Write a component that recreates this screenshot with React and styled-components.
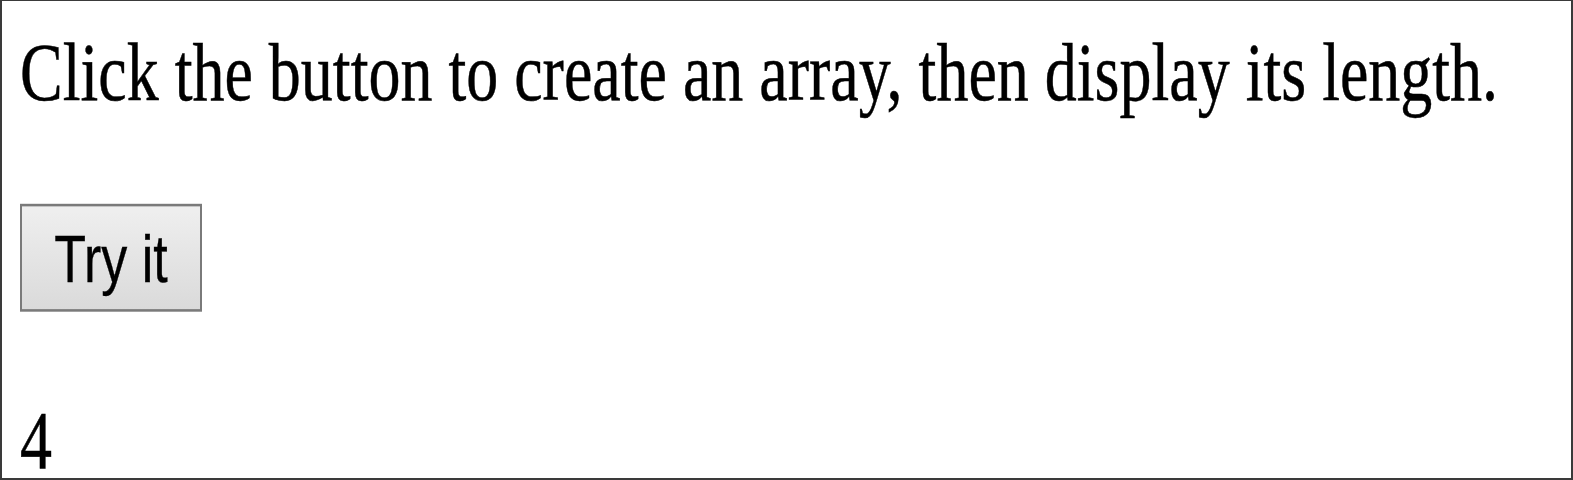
import React, { useState } from 'react';
import styled, { createGlobalStyle } from 'styled-components';

const GlobalStyle = createGlobalStyle`
    html, body { margin: 0; padding: 0; background: #fff; }
    body { overflow: hidden; }
`

const Frame = styled.div`
    box-sizing: border-box;
    width: 1573px;
    height: 480px;
    border: 2px solid #3a3a3a;
    border-top-width: 1px;
    overflow: hidden;
    background: #fff;
`

// the screenshot is stretched vertically, so the whole page is scaled on Y
const Page = styled.div`
    transform: scaleY(1.3);
    transform-origin: top left;
    padding: 18px 0 0 18px;
    font-family: "Liberation Serif", "Times New Roman", serif;
    font-size: 64px;
    color: #000;
    -webkit-text-stroke: 0.4px #000;
`

const Text = styled.p`
    margin: ${p => p.$top ? '71px 0 0' : '0 0 64px'};
    line-height: ${p => p.$top ? '56px' : 'normal'};
    white-space: nowrap;
`

const Button = styled.button`
    box-sizing: border-box;
    display: block;
    width: 182px;
    height: 83px;
    margin: 0;
    padding: 0;
    border: 2px solid #7a7a7a;
    border-radius: 0;
    background: linear-gradient(#efefef, #dadada);
    font-family: "Liberation Sans", Arial, sans-serif;
    font-size: 52px;
    line-height: 1;
    color: #000;
    -webkit-text-stroke: 0.3px #000;
    text-align: center;
    cursor: pointer;
`

const App = () => {
    const [len, setLen] = useState(4)

    return (
        <Frame>
            <GlobalStyle />
            <Page>
                <Text>Click the button to create an array, then display its length.</Text>
                <Button onClick={() => setLen(['Banana', 'Orange', 'Apple', 'Mango'].length)}>Try it</Button>
                <Text $top>{len}</Text>
            </Page>
        </Frame>
    );
};

export default App;
